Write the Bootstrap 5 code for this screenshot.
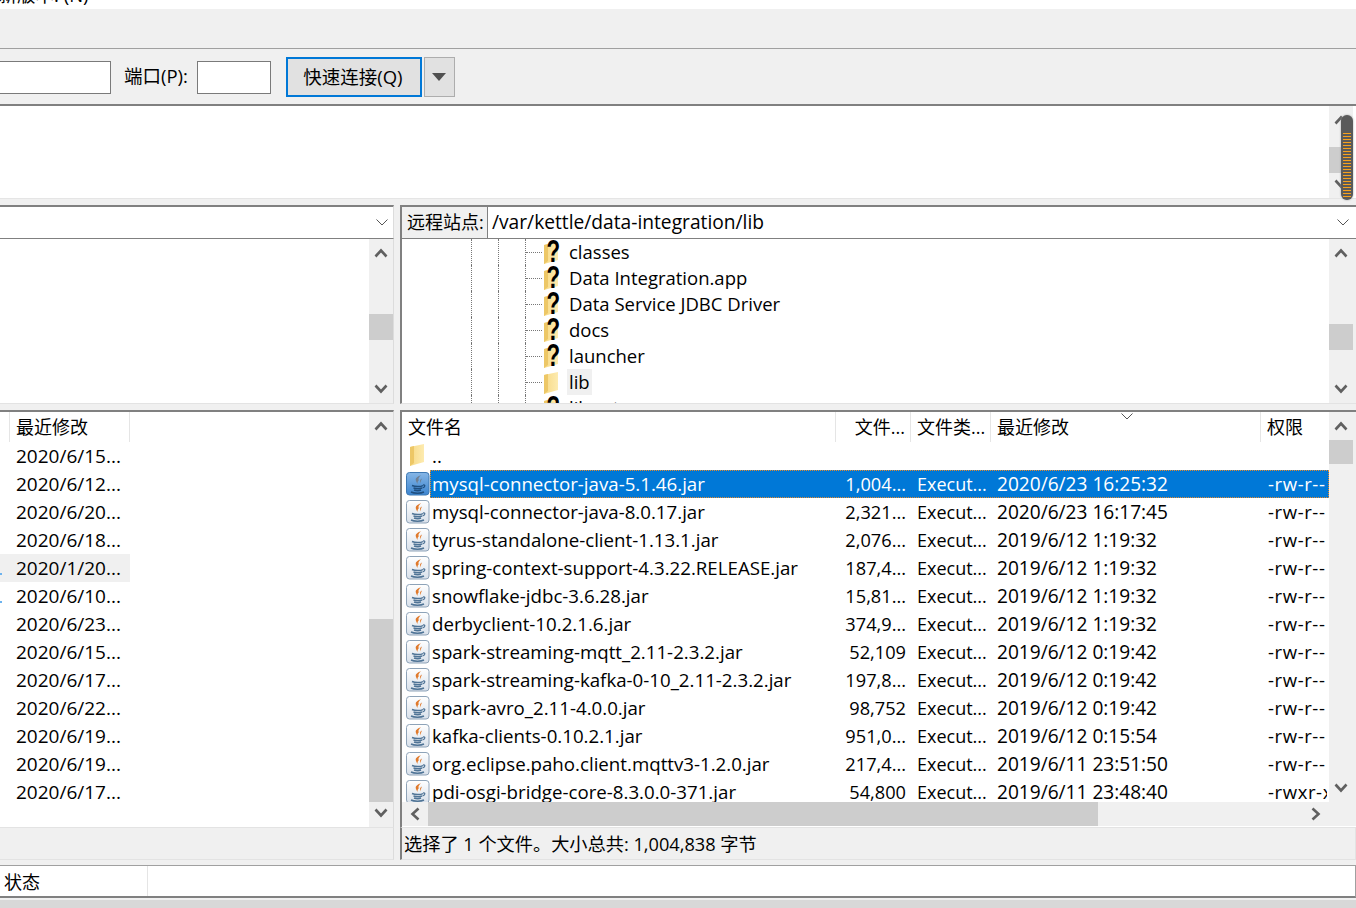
<!DOCTYPE html>
<html lang="zh-CN">
<head>
<meta charset="utf-8">
<title>FileZilla</title>
<link rel="stylesheet" href="https://cdn.jsdelivr.net/npm/bootstrap@5.3.0/dist/css/bootstrap.min.css">
<style>
html,body{height:908px;overflow:hidden;margin:0}
body{font-family:"Open Sans","Noto Sans CJK SC",sans-serif;font-size:18.5px;color:#000;background:#f0f0f0;line-height:1}
.fz-app{width:1356px;height:908px;overflow:hidden;position:relative}
.fz-menu{height:9px;background:#fff;overflow:hidden;flex:none}
.fz-menu span{display:block;margin-top:-17px;line-height:24px;white-space:nowrap;margin-left:-20px}
.fz-tools{height:40px;flex:none;border-bottom:1px solid #a0a0a0}
.fz-quick{height:57px;flex:none;border-bottom:2px solid #808080}
.fz-field{height:33px;border:1px solid #7a7a7a;border-radius:0;padding:0;background:#fff;margin-top:2px}
.fz-host{width:111px;margin-right:13px;border-left:0}
.fz-port{width:74px;margin-left:9px;margin-right:15px}
.fz-qbtn{width:136px;height:40px;border:2px solid #0078d7;border-radius:0;background:#e1e1e1;padding:0 2px 0 0;font-size:18.5px;color:#000}
.fz-qdrop{width:31px;height:40px;border:1px solid #adadad;border-radius:0;background:#e1e1e1;padding:0;margin-left:2px}
.fz-log{height:93px;flex:none;background:#fff;border-bottom:1px solid #e5e5e5}
.fz-logbar{margin-right:3px}
.fz-gap-a{height:6px;flex:none}
.fz-panes{height:655px;flex:none}
.fz-left{width:397px;flex:none;border-right:3px solid #f0f0f0}
.fz-right{width:956px;flex:none;margin-left:3px}
.fz-sitebar{height:34px;flex:none;background:#fff;border-top:2px solid #808080;border-bottom:1px solid #808080}
.fz-left .fz-inner{border-right:1px solid #dcdcdc}
.fz-right .fz-inner{border-left:2px solid #808080}
.fz-sitelabel{width:86px;flex:none;background:#f0f0f0;border-right:1px solid #808080;padding-left:5px;line-height:30px;white-space:nowrap;font-size:18px}
.fz-path{line-height:30px;padding-left:4px;font-size:19.2px}
.fz-combo-l{margin-right:5px}
.fz-combo-r{margin-right:7px}
.fz-tree{height:165px;flex:none;background:#fff;border-bottom:1px solid #e3e3e3;overflow:hidden}
.fz-treebody{width:927px;overflow:hidden}
.fz-trow{height:26px;overflow:hidden;padding-left:69px;flex:none}
.fz-guide{width:27px;flex:none;height:26px;border-left:1px dotted #777}
.fz-guide-last{width:19px;position:relative}
.fz-guide-last::after{content:"";position:absolute;left:0;right:2px;top:13px;border-top:1px dotted #777}
.fz-ticon{width:16px;height:26px;flex:none;position:relative;margin-right:7px}
.fz-ticon svg{position:absolute;left:0;top:3px}
.fz-q{position:absolute;left:0;top:0;width:17px;text-align:center;font:700 31px/26px "Liberation Sans",sans-serif;color:#000;transform:scaleX(.72)}
.fz-tname{padding:0 2px;line-height:26px;white-space:nowrap}
.fz-hover{background:#f0f0f0}
.fz-gap-b{height:6px;flex:none}
.fz-list{height:417px;flex:none;background:#fff;border-top:2px solid #808080}
.fz-listbody{overflow:hidden;min-width:0}
.fz-head{height:30px;flex:none;line-height:30px;white-space:nowrap;font-size:18px}
.fz-hcell{height:30px;border-right:1px solid #e5e5e5;flex:none;padding-left:6px;position:relative;overflow:hidden}
.fz-row{height:28px;flex:none;white-space:nowrap;line-height:27px;overflow:hidden}
.fz-row-l{padding-left:16px;font-size:19px;position:relative;line-height:29px}
.fz-row-l.fz-hover{width:130px}
.fz-tick{position:absolute;left:0;top:19px;width:2px;height:2px;background:#6db3ee}
.fz-fic{width:24px;height:28px;flex:none;padding:2px 0 0 0}
.fz-fic svg{display:block}
.fz-cells{border:1px solid transparent;height:28px;flex:1;min-width:0;line-height:25px}
.fz-sel .fz-cells{background:#0078d7;color:#fff;border:1px dotted #e58a2e}
.fz-c1{width:405px;padding-left:1px;flex:none;overflow:hidden;font-size:18.7px}
.fz-c2{width:75px;text-align:right;padding-right:5px;flex:none;font-size:18.2px}
.fz-c3{width:80px;padding-left:6px;flex:none;overflow:hidden;font-size:18px}
.fz-c4{width:270px;padding-left:6px;flex:none;font-size:19.1px}
.fz-c5{width:66px;padding-left:7px;flex:none;overflow:hidden;letter-spacing:.6px}
.fz-vbar{width:24px;flex:none;background:#f0f0f0;position:relative}
.fz-vbtn{height:28px;flex:none}
.fz-track{min-height:0}
.fz-thumb{background:#cdcdcd;width:24px}
.fz-hbar{height:24px;flex:none;background:#f0f0f0}
.fz-hbtn{width:26px;flex:none}
.fz-hthumb{width:670px;background:#cdcdcd}
.fz-side{width:3px;flex:none;background:#f0f0f0}
.fz-status{height:33px;flex:none;background:#f0f0f0;border-top:1px solid #e3e3e3;border-bottom:1px solid #e3e3e3;line-height:32px;padding-left:4px;font-size:18.2px}
.fz-left .fz-status{border-right:1px solid #dcdcdc}
.fz-right .fz-status{border-left:2px solid #808080;padding-left:2px;border-right:1px solid #e3e3e3}
.fz-queue{height:33px;flex:none;margin-top:5px;background:#fff;border-top:1px solid #a0a0a0;border-bottom:2px solid #808080;border-right:1px solid #a0a0a0}
.fz-qhead{width:148px;flex:none;padding-left:4px;border-right:1px solid #e5e5e5;line-height:32px;font-size:18px}
.fz-foot{height:12px;flex:none;background:#d8d8d8;border-top:2px solid #f0f0f0}
.fz-float{position:absolute;left:1341px;top:115px;width:12px;height:85px;background:#5a5a5a;border-radius:6px;padding:18px 2px 0;box-shadow:0 0 2px #999}
.fz-float i{display:block;height:1px;margin-bottom:2px;background:#f7a11c}
.fz-ch{display:block;margin:auto}
</style>
</head>
<body>
<svg width="0" height="0" class="position-absolute">
<defs>
<symbol id="up" viewBox="0 0 14 10"><path d="M1.5 8.500 7 2.500l5.500 6" fill="none" stroke="#606060" stroke-width="2.600"/></symbol>
<symbol id="dn" viewBox="0 0 14 10"><path d="M1.500 1.500 7 7.500l5.500-6" fill="none" stroke="#606060" stroke-width="2.600"/></symbol>
<symbol id="lf" viewBox="0 0 10 14"><path d="M8.500 1.500 2.500 7l6 5.500" fill="none" stroke="#606060" stroke-width="2.600"/></symbol>
<symbol id="rt" viewBox="0 0 10 14"><path d="M1.500 1.500 7.500 7l-6 5.500" fill="none" stroke="#606060" stroke-width="2.600"/></symbol>
<symbol id="combo" viewBox="0 0 12 7"><path d="M.5.500 6 6l5.500-5.500" fill="none" stroke="#555" stroke-width="1"/></symbol>
<linearGradient id="fg" x1="0" y1="0" x2="1" y2="0"><stop offset="0" stop-color="#f7d985"/><stop offset="1" stop-color="#fdebb0"/></linearGradient>
<symbol id="folder" viewBox="0 0 15 22"><path d="M0 3 14 0v18L0 22z" fill="url(#fg)"/><path d="M0 3 4 2v17l-4 3z" fill="#edc766"/></symbol>
<linearGradient id="jg" x1="0" y1="0" x2="0" y2="1"><stop offset="0" stop-color="#fff"/><stop offset="1" stop-color="#d8e0ea"/></linearGradient>
<linearGradient id="js" x1="0" y1="0" x2="0" y2="1"><stop offset="0" stop-color="#86b6e6"/><stop offset="1" stop-color="#3c85d0"/></linearGradient>
<symbol id="jar" viewBox="0 0 24 24"><rect x=".5" y=".5" width="22.500" height="22.500" rx="3" fill="url(#jg)" stroke="#8ea3b8"/><path d="M15 3c-4 2-6 3-5 6 .3 1 1 2 1.500 3-.2-2 .5-3 2-4.500-1.500 1-1.800-1 1.500-4.500zM16 6.500c-2 1-2.500 2-1.500 5 0-1.500.5-3 1.500-5z" fill="#e07a2c"/><path d="M6 13.500c3 1.400 9 1.400 11 0M7.500 16c2.500.8 6.500.8 8.500 0M8 18c2 .7 5.500.7 7 0M5 20c3 1.500 10 1.500 13 0" fill="none" stroke="#4f7496" stroke-width="1.500"/><path d="M17 13c2.500-.5 2.500 2-.5 3" fill="none" stroke="#4f7496" stroke-width="1.200"/></symbol>
<symbol id="jarsel" viewBox="0 0 24 24"><rect x=".5" y=".5" width="22.500" height="22.500" rx="3" fill="url(#js)" stroke="#3d78b3"/><path d="M15 3c-4 2-6 3-5 6 .3 1 1 2 1.500 3-.2-2 .5-3 2-4.500-1.500 1-1.800-1 1.500-4.500zM16 6.500c-2 1-2.500 2-1.500 5 0-1.500.5-3 1.500-5z" fill="#6f7f92"/><path d="M6 13.500c3 1.400 9 1.400 11 0M7.500 16c2.500.8 6.500.8 8.500 0M8 18c2 .7 5.500.7 7 0M5 20c3 1.500 10 1.500 13 0" fill="none" stroke="#1f4f80" stroke-width="1.500"/><path d="M17 13c2.500-.5 2.500 2-.5 3" fill="none" stroke="#1f4f80" stroke-width="1.200"/></symbol>
</defs>
</svg>
<div class="fz-app d-flex flex-column">
  <div class="fz-menu"><span>有新版本! (N)</span></div>
  <div class="fz-tools"></div>
  <div class="fz-quick d-flex align-items-center">
    <input class="fz-field fz-host" aria-label="host">
    <label>端口(P):</label>
    <input class="fz-field fz-port" aria-label="port">
    <button class="btn fz-qbtn" type="button">快速连接(Q)</button>
    <button class="btn fz-qdrop d-flex align-items-center justify-content-center" type="button"><svg width="14" height="8" viewBox="0 0 14 8"><path d="M0 0h14L7 8z" fill="#505050"/></svg></button>
  </div>
  <div class="fz-log d-flex justify-content-end">
    <div class="fz-vbar d-flex flex-column fz-logbar">
      <div class="fz-vbtn d-flex align-items-center"><svg class="fz-ch" width="14" height="10"><use href="#up"/></svg></div>
      <div class="fz-track flex-grow-1"><div class="fz-thumb" style="height:26px;margin-top:13px"></div></div>
      <div class="fz-vbtn d-flex align-items-center"><svg class="fz-ch" width="14" height="10"><use href="#dn"/></svg></div>
    </div>
  </div>
  <div class="fz-gap-a"></div>
  <div class="fz-panes d-flex">
    <div class="fz-left d-flex flex-column">
      <div class="fz-sitebar fz-inner d-flex align-items-center justify-content-end"><svg class="fz-combo-l" width="12" height="7"><use href="#combo"/></svg></div>
      <div class="fz-tree fz-inner d-flex justify-content-end">
        <div class="fz-vbar d-flex flex-column">
          <div class="fz-vbtn d-flex align-items-center"><svg class="fz-ch" width="14" height="10"><use href="#up"/></svg></div>
          <div class="fz-track flex-grow-1"><div class="fz-thumb" style="height:26px;margin-top:47px"></div></div>
          <div class="fz-vbtn d-flex align-items-center"><svg class="fz-ch" width="14" height="10"><use href="#dn"/></svg></div>
        </div>
      </div>
      <div class="fz-gap-b"></div>
      <div class="fz-list fz-inner d-flex">
        <div class="fz-listbody flex-grow-1 d-flex flex-column">
          <div class="fz-head d-flex">
            <div class="fz-hcell" style="width:10px;padding:0"></div>
            <div class="fz-hcell" style="width:120px">最近修改</div>
          </div>
          <div class="fz-row fz-row-l">2020/6/15...</div>
          <div class="fz-row fz-row-l">2020/6/12...</div>
          <div class="fz-row fz-row-l">2020/6/20...</div>
          <div class="fz-row fz-row-l">2020/6/18...</div>
          <div class="fz-row fz-row-l fz-hover"><span class="fz-tick"></span>2020/1/20...</div>
          <div class="fz-row fz-row-l"><span class="fz-tick"></span>2020/6/10...</div>
          <div class="fz-row fz-row-l">2020/6/23...</div>
          <div class="fz-row fz-row-l">2020/6/15...</div>
          <div class="fz-row fz-row-l">2020/6/17...</div>
          <div class="fz-row fz-row-l">2020/6/22...</div>
          <div class="fz-row fz-row-l">2020/6/19...</div>
          <div class="fz-row fz-row-l">2020/6/19...</div>
          <div class="fz-row fz-row-l">2020/6/17...</div>
        </div>
        <div class="fz-vbar d-flex flex-column">
          <div class="fz-vbtn d-flex align-items-center"><svg class="fz-ch" width="14" height="10"><use href="#up"/></svg></div>
          <div class="fz-track flex-grow-1"><div class="fz-thumb" style="height:183px;margin-top:179px"></div></div>
          <div class="fz-vbtn d-flex align-items-center"><svg class="fz-ch" width="14" height="10"><use href="#dn"/></svg></div>
        </div>
      </div>
      <div class="fz-status"></div>
    </div>
    <div class="fz-right d-flex flex-column">
      <div class="fz-sitebar fz-inner d-flex">
        <div class="fz-sitelabel">远程站点:</div>
        <div class="fz-path flex-grow-1">/var/kettle/data-integration/lib</div>
        <svg class="fz-combo-r align-self-center" width="12" height="7"><use href="#combo"/></svg>
      </div>
      <div class="fz-tree fz-inner d-flex">
        <div class="fz-treebody d-flex flex-column">
          <div class="fz-trow d-flex"><span class="fz-guide"></span><span class="fz-guide"></span><span class="fz-guide fz-guide-last"></span><span class="fz-ticon"><svg width="15" height="22"><use href="#folder"/></svg><span class="fz-q">?</span></span><span class="fz-tname">classes</span></div>
          <div class="fz-trow d-flex"><span class="fz-guide"></span><span class="fz-guide"></span><span class="fz-guide fz-guide-last"></span><span class="fz-ticon"><svg width="15" height="22"><use href="#folder"/></svg><span class="fz-q">?</span></span><span class="fz-tname">Data Integration.app</span></div>
          <div class="fz-trow d-flex"><span class="fz-guide"></span><span class="fz-guide"></span><span class="fz-guide fz-guide-last"></span><span class="fz-ticon"><svg width="15" height="22"><use href="#folder"/></svg><span class="fz-q">?</span></span><span class="fz-tname">Data Service JDBC Driver</span></div>
          <div class="fz-trow d-flex"><span class="fz-guide"></span><span class="fz-guide"></span><span class="fz-guide fz-guide-last"></span><span class="fz-ticon"><svg width="15" height="22"><use href="#folder"/></svg><span class="fz-q">?</span></span><span class="fz-tname">docs</span></div>
          <div class="fz-trow d-flex"><span class="fz-guide"></span><span class="fz-guide"></span><span class="fz-guide fz-guide-last"></span><span class="fz-ticon"><svg width="15" height="22"><use href="#folder"/></svg><span class="fz-q">?</span></span><span class="fz-tname">launcher</span></div>
          <div class="fz-trow d-flex"><span class="fz-guide"></span><span class="fz-guide"></span><span class="fz-guide fz-guide-last"></span><span class="fz-ticon"><svg width="15" height="22"><use href="#folder"/></svg></span><span class="fz-tname fz-hover">lib</span></div>
          <div class="fz-trow d-flex"><span class="fz-guide"></span><span class="fz-guide"></span><span class="fz-guide fz-guide-last"></span><span class="fz-ticon"><svg width="15" height="22"><use href="#folder"/></svg><span class="fz-q">?</span></span><span class="fz-tname">libswt</span></div>
        </div>
        <div class="fz-vbar d-flex flex-column">
          <div class="fz-vbtn d-flex align-items-center"><svg class="fz-ch" width="14" height="10"><use href="#up"/></svg></div>
          <div class="fz-track flex-grow-1"><div class="fz-thumb" style="height:26px;margin-top:57px"></div></div>
          <div class="fz-vbtn d-flex align-items-center"><svg class="fz-ch" width="14" height="10"><use href="#dn"/></svg></div>
        </div>
        <div class="fz-side"></div>
      </div>
      <div class="fz-gap-b"></div>
      <div class="fz-list fz-inner d-flex flex-column">
        <div class="d-flex" style="height:390px">
          <div class="fz-listbody flex-grow-1 d-flex flex-column">
            <div class="fz-head d-flex">
              <div class="fz-hcell" style="width:434px">文件名</div>
              <div class="fz-hcell text-end" style="width:75px;padding:0 5px 0 0">文件...</div>
              <div class="fz-hcell" style="width:80px">文件类...</div>
              <div class="fz-hcell" style="width:270px">最近修改<svg class="position-absolute" style="left:130px;top:1px" width="12" height="7"><use href="#combo"/></svg></div>
              <div class="fz-hcell border-0" style="width:68px">权限</div>
            </div>
            <div class="fz-row d-flex ps-1"><div class="fz-fic"><svg class="ms-1" width="15" height="22"><use href="#folder"/></svg></div><div class="fz-cells d-flex align-items-baseline"><div class="fz-c1">..</div></div></div>
            <div class="fz-row fz-sel d-flex ps-1"><div class="fz-fic"><svg width="24" height="24"><use href="#jarsel"/></svg></div><div class="fz-cells d-flex align-items-baseline"><div class="fz-c1">mysql-connector-java-5.1.46.jar</div><div class="fz-c2">1,004...</div><div class="fz-c3">Execut...</div><div class="fz-c4">2020/6/23 16:25:32</div><div class="fz-c5">-rw-r--</div></div></div>
            <div class="fz-row d-flex ps-1"><div class="fz-fic"><svg width="24" height="24"><use href="#jar"/></svg></div><div class="fz-cells d-flex align-items-baseline"><div class="fz-c1">mysql-connector-java-8.0.17.jar</div><div class="fz-c2">2,321...</div><div class="fz-c3">Execut...</div><div class="fz-c4">2020/6/23 16:17:45</div><div class="fz-c5">-rw-r--</div></div></div>
            <div class="fz-row d-flex ps-1"><div class="fz-fic"><svg width="24" height="24"><use href="#jar"/></svg></div><div class="fz-cells d-flex align-items-baseline"><div class="fz-c1">tyrus-standalone-client-1.13.1.jar</div><div class="fz-c2">2,076...</div><div class="fz-c3">Execut...</div><div class="fz-c4">2019/6/12 1:19:32</div><div class="fz-c5">-rw-r--</div></div></div>
            <div class="fz-row d-flex ps-1"><div class="fz-fic"><svg width="24" height="24"><use href="#jar"/></svg></div><div class="fz-cells d-flex align-items-baseline"><div class="fz-c1">spring-context-support-4.3.22.RELEASE.jar</div><div class="fz-c2">187,4...</div><div class="fz-c3">Execut...</div><div class="fz-c4">2019/6/12 1:19:32</div><div class="fz-c5">-rw-r--</div></div></div>
            <div class="fz-row d-flex ps-1"><div class="fz-fic"><svg width="24" height="24"><use href="#jar"/></svg></div><div class="fz-cells d-flex align-items-baseline"><div class="fz-c1">snowflake-jdbc-3.6.28.jar</div><div class="fz-c2">15,81...</div><div class="fz-c3">Execut...</div><div class="fz-c4">2019/6/12 1:19:32</div><div class="fz-c5">-rw-r--</div></div></div>
            <div class="fz-row d-flex ps-1"><div class="fz-fic"><svg width="24" height="24"><use href="#jar"/></svg></div><div class="fz-cells d-flex align-items-baseline"><div class="fz-c1">derbyclient-10.2.1.6.jar</div><div class="fz-c2">374,9...</div><div class="fz-c3">Execut...</div><div class="fz-c4">2019/6/12 1:19:32</div><div class="fz-c5">-rw-r--</div></div></div>
            <div class="fz-row d-flex ps-1"><div class="fz-fic"><svg width="24" height="24"><use href="#jar"/></svg></div><div class="fz-cells d-flex align-items-baseline"><div class="fz-c1">spark-streaming-mqtt_2.11-2.3.2.jar</div><div class="fz-c2">52,109</div><div class="fz-c3">Execut...</div><div class="fz-c4">2019/6/12 0:19:42</div><div class="fz-c5">-rw-r--</div></div></div>
            <div class="fz-row d-flex ps-1"><div class="fz-fic"><svg width="24" height="24"><use href="#jar"/></svg></div><div class="fz-cells d-flex align-items-baseline"><div class="fz-c1">spark-streaming-kafka-0-10_2.11-2.3.2.jar</div><div class="fz-c2">197,8...</div><div class="fz-c3">Execut...</div><div class="fz-c4">2019/6/12 0:19:42</div><div class="fz-c5">-rw-r--</div></div></div>
            <div class="fz-row d-flex ps-1"><div class="fz-fic"><svg width="24" height="24"><use href="#jar"/></svg></div><div class="fz-cells d-flex align-items-baseline"><div class="fz-c1">spark-avro_2.11-4.0.0.jar</div><div class="fz-c2">98,752</div><div class="fz-c3">Execut...</div><div class="fz-c4">2019/6/12 0:19:42</div><div class="fz-c5">-rw-r--</div></div></div>
            <div class="fz-row d-flex ps-1"><div class="fz-fic"><svg width="24" height="24"><use href="#jar"/></svg></div><div class="fz-cells d-flex align-items-baseline"><div class="fz-c1">kafka-clients-0.10.2.1.jar</div><div class="fz-c2">951,0...</div><div class="fz-c3">Execut...</div><div class="fz-c4">2019/6/12 0:15:54</div><div class="fz-c5">-rw-r--</div></div></div>
            <div class="fz-row d-flex ps-1"><div class="fz-fic"><svg width="24" height="24"><use href="#jar"/></svg></div><div class="fz-cells d-flex align-items-baseline"><div class="fz-c1">org.eclipse.paho.client.mqttv3-1.2.0.jar</div><div class="fz-c2">217,4...</div><div class="fz-c3">Execut...</div><div class="fz-c4">2019/6/11 23:51:50</div><div class="fz-c5">-rw-r--</div></div></div>
            <div class="fz-row d-flex ps-1"><div class="fz-fic"><svg width="24" height="24"><use href="#jar"/></svg></div><div class="fz-cells d-flex align-items-baseline"><div class="fz-c1">pdi-osgi-bridge-core-8.3.0.0-371.jar</div><div class="fz-c2">54,800</div><div class="fz-c3">Execut...</div><div class="fz-c4">2019/6/11 23:48:40</div><div class="fz-c5">-rwxr-x</div></div></div>
          </div>
          <div class="fz-vbar d-flex flex-column">
            <div class="fz-vbtn d-flex align-items-center"><svg class="fz-ch" width="14" height="10"><use href="#up"/></svg></div>
            <div class="fz-track flex-grow-1"><div class="fz-thumb" style="height:24px"></div></div>
            <div class="fz-vbtn d-flex align-items-center"><svg class="fz-ch" width="14" height="10"><use href="#dn"/></svg></div>
          </div>
          <div class="fz-side"></div>
        </div>
        <div class="fz-hbar d-flex">
          <div class="fz-hbtn d-flex align-items-center"><svg class="fz-ch" width="10" height="14"><use href="#lf"/></svg></div>
          <div class="fz-hthumb"></div>
          <div class="flex-grow-1"></div>
          <div class="fz-hbtn d-flex align-items-center" style="margin-right:27px"><svg class="fz-ch" width="10" height="14"><use href="#rt"/></svg></div>
        </div>
      </div>
      <div class="fz-status">选择了 1 个文件。大小总共: 1,004,838 字节</div>
    </div>
  </div>
  <div class="fz-queue d-flex"><div class="fz-qhead">状态</div></div>
  <div class="fz-foot"></div>
  <div class="fz-float"><i></i><i></i><i></i><i></i><i></i><i></i><i></i><i></i><i></i><i></i><i></i><i></i><i></i><i></i><i></i><i></i><i></i><i></i><i></i><i></i><i></i><i></i></div>
</div>
</body>
</html>
